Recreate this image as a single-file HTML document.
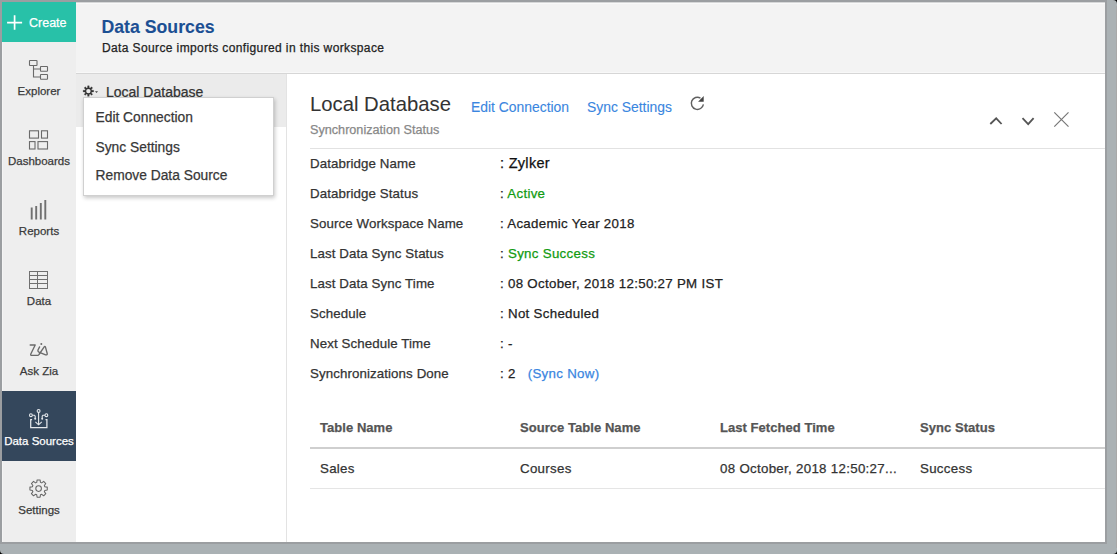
<!DOCTYPE html>
<html><head><meta charset="utf-8">
<style>
*{margin:0;padding:0;box-sizing:border-box}
html,body{width:1117px;height:554px;overflow:hidden}
body{position:relative;background:#000;-webkit-font-smoothing:antialiased;font-family:"Liberation Sans",sans-serif;color:#333}
.a{position:absolute;white-space:nowrap;line-height:1;-webkit-text-stroke:.25px currentColor}
#frame{position:absolute;left:0;top:0;width:1107px;height:544px;background:#9b9ea1;border-top-left-radius:0}
#app{position:absolute;left:2px;top:2px;width:1103px;height:540px;background:#fff;overflow:hidden}
#side{position:absolute;left:0;top:0;width:74px;height:540px;background:#eeeeee}
#create{position:absolute;left:0;top:0;width:74px;height:40px;z-index:2;background:#28c1a8}
.item{position:absolute;left:0;width:74px;height:70px}
.lbl{position:absolute;left:0;width:74px;text-align:center;font-size:11.5px;line-height:1;color:#3a3a3a;-webkit-text-stroke:.25px currentColor}
#hdr{position:absolute;left:74px;top:0;width:1029px;height:72px;background:#f3f3f3;border-bottom:1px solid #d6d6d6;box-shadow:inset 0 -1px 0 #f8f8f8}
#lp{position:absolute;left:74px;top:72px;width:211px;height:468px;background:#fff;border-right:1px solid #e3e3e3}
#lph{position:absolute;left:0;top:0;width:210px;height:53px;background:#ebebeb}
#menu{position:absolute;left:81px;top:95px;width:191px;height:99px;background:#fff;border:1px solid #d0d0d0;box-shadow:1px 2px 4px rgba(0,0,0,.22)}
.row{position:absolute;left:308px;font-size:13.3px;letter-spacing:.1px;color:#333}
.val{position:absolute;left:498px;font-size:13.3px;letter-spacing:.3px;color:#222}
.th{position:absolute;font-size:13px;font-weight:bold;letter-spacing:.05px;color:#555}
.td{position:absolute;font-size:13.3px;letter-spacing:.3px;color:#333}
</style></head><body>
<div style="position:absolute;left:0;top:0;width:1117px;height:554px;background:#aab1b4;border-radius:4px"></div><div style="position:absolute;left:1116px;top:6px;width:1px;height:542px;background:#a8a8a8"></div>
<div id="frame"></div>
<div id="app">
  <div id="side">
    <div class="a" style="left:0;top:40px;width:1px;height:500px;background:#f4f4f4"></div>
    <div id="create">
      <svg class="a" style="left:0;top:0" width="30" height="40" viewBox="0 0 30 40"><path d="M5.1 20.6H20.1M12.6 13.2V27.8" stroke="#fff" stroke-width="1.7" fill="none"/></svg>
      <div class="a" style="left:27px;top:14.5px;font-size:12.5px;color:#fff">Create</div>
    </div>
    <!-- Explorer 39..109 -->
    <div class="item" style="top:39px">
      <svg class="a" style="left:0;top:0" width="74" height="70" viewBox="0 0 74 70">
        <g fill="none" stroke="#6a6a6a" stroke-width="1.1">
          <rect x="27.5" y="19.5" width="7.5" height="5" rx=".5"/>
          <rect x="38.5" y="25.5" width="7" height="4.8" rx=".5"/>
          <rect x="38.5" y="33.5" width="7" height="4.8" rx=".5"/>
          <path d="M31.5 24.5V36H38.5M31.5 28H38.5"/>
        </g>
      </svg>
      <div class="lbl" style="top:45px">Explorer</div>
    </div>
    <!-- Dashboards -->
    <div class="item" style="top:109px">
      <svg class="a" style="left:0;top:0" width="74" height="70" viewBox="0 0 74 70">
        <g fill="none" stroke="#6a6a6a" stroke-width="1.1">
          <rect x="27.5" y="19.8" width="9" height="7.3"/>
          <rect x="39.5" y="19.8" width="6" height="7.3"/>
          <rect x="27.5" y="30.6" width="5.5" height="7.4"/>
          <rect x="36" y="30.6" width="9.5" height="7.4"/>
        </g>
      </svg>
      <div class="lbl" style="top:45px">Dashboards</div>
    </div>
    <!-- Reports -->
    <div class="item" style="top:179px">
      <svg class="a" style="left:0;top:0" width="74" height="70" viewBox="0 0 74 70">
        <g fill="none" stroke="#707070" stroke-width="1.9">
          <path d="M29.7 26.5V38.6M34.2 25V38.6M38.8 22V38.6M43.3 19V38.6"/>
        </g>
      </svg>
      <div class="lbl" style="top:45px">Reports</div>
    </div>
    <!-- Data -->
    <div class="item" style="top:249px">
      <svg class="a" style="left:0;top:0" width="74" height="70" viewBox="0 0 74 70">
        <g fill="none" stroke="#707070" stroke-width="1">
          <rect x="27.5" y="20.5" width="18" height="17"/>
          <path d="M35.5 20.5V37.5M27.5 24.5H45.5M27.5 28.5H45.5M27.5 32.5H45.5"/>
        </g>
      </svg>
      <div class="lbl" style="top:45px">Data</div>
    </div>
    <!-- Ask Zia -->
    <div class="item" style="top:319px">
      <svg class="a" style="left:0;top:0" width="74" height="70" viewBox="0 0 74 70">
        <g fill="none" stroke="#6a6a6a" stroke-width="1.35" stroke-linejoin="round" stroke-linecap="round">
          <path d="M28.2 24H33.2L28.8 33Q28.3 34.4 29.8 34.4H35.5Q36.5 34.4 37 33.5L42.2 25.8Q42.8 25 43.4 25.9L45.2 32.5Q45.4 34.4 43.6 33.8L37.5 31.4Q35.4 30.6 36.1 28.8L37.6 25.9"/>
        </g>
        <circle cx="39.3" cy="23" r="1" fill="#6a6a6a"/>
      </svg>
      <div class="lbl" style="top:45px">Ask Zia</div>
    </div>
    <!-- Data Sources active -->
    <div class="item" style="top:389px;background:#34475c">
      <svg class="a" style="left:0;top:0" width="74" height="70" viewBox="0 0 74 70">
        <g fill="none" stroke="#e4e8ec" stroke-width="1.1">
          <circle cx="36.6" cy="19.9" r="1.45"/>
          <circle cx="28.9" cy="24.2" r="1.4"/>
          <circle cx="44.4" cy="24.2" r="1.4"/>
          <path d="M36.6 21.4V33.6M33.4 30.8L36.6 33.8L39.8 30.8"/>
          <path d="M30.3 24.2H32.4L33.2 25.2V27.5M43 24.2H40.9L40.2 25.2V27.5"/>
          <path d="M30.1 28.6H28.7V36.5H44.9V28.6H43.5" stroke-width="1.25"/>
        </g>
        <circle cx="33.2" cy="27.7" r="1" fill="#e4e8ec"/>
        <circle cx="40.2" cy="27.7" r="1" fill="#e4e8ec"/>
      </svg>
      <div class="lbl" style="top:45px;color:#fff">Data Sources</div>
    </div>
    <!-- Settings -->
    <div class="item" style="top:459px">
      <svg class="a" style="left:0;top:0" width="74" height="70" viewBox="0 0 74 70">
        <g fill="none" stroke="#666" stroke-width="1.05">
          <path d="M42.83 25.74 L45.27 26.11 L45.27 29.09 L42.83 29.46 L42.32 30.69 L43.79 32.68 L41.68 34.79 L39.69 33.32 L38.46 33.83 L38.09 36.27 L35.11 36.27 L34.74 33.83 L33.51 33.32 L31.52 34.79 L29.41 32.68 L30.88 30.69 L30.37 29.46 L27.93 29.09 L27.93 26.11 L30.37 25.74 L30.88 24.51 L29.41 22.52 L31.52 20.41 L33.51 21.88 L34.74 21.37 L35.11 18.93 L38.09 18.93 L38.46 21.37 L39.69 21.88 L41.68 20.41 L43.79 22.52 L42.32 24.51Z" stroke-linejoin="round"/>
          <circle cx="36.6" cy="27.6" r="2.8"/>
        </g>
      </svg>
      <div class="lbl" style="top:44px">Settings</div>
    </div>
  </div>

  <div class="a" style="left:74px;top:0;width:1029px;height:1px;background:#d6d7d8;z-index:3"></div>
  <div class="a" style="left:74px;top:1px;width:1029px;height:1px;background:#f9f9f9;z-index:3"></div>
  <div id="hdr">
    <div class="a" style="left:25.5px;top:16.5px;font-size:17.7px;font-weight:bold;color:#1b4f93;-webkit-text-stroke:.1px currentColor">Data Sources</div>
    <div class="a" style="left:26px;top:40px;font-size:12px;letter-spacing:.38px;color:#222">Data Source imports configured in this workspace</div>
  </div>

  <div id="lp">
    <div id="lph">
      <svg class="a" style="left:4px;top:10px" width="22" height="16" viewBox="0 0 22 16">
        <path d="M11.80 6.27 L13.64 6.31 L13.64 7.89 L11.80 7.93 L11.39 8.92 L12.67 10.25 L11.55 11.37 L10.22 10.09 L9.23 10.50 L9.19 12.34 L7.61 12.34 L7.57 10.50 L6.58 10.09 L5.25 11.37 L4.13 10.25 L5.41 8.92 L5.00 7.93 L3.16 7.89 L3.16 6.31 L5.00 6.27 L5.41 5.28 L4.13 3.95 L5.25 2.83 L6.58 4.11 L7.57 3.70 L7.61 1.86 L9.19 1.86 L9.23 3.70 L10.22 4.11 L11.55 2.83 L12.67 3.95 L11.39 5.28Z" fill="#333" stroke="#333" stroke-width=".3" stroke-linejoin="round"/>
        <circle cx="8.4" cy="7.1" r="2.2" fill="#ebebeb"/>
        <path d="M15 7.2h3l-1.5 1.8z" fill="#444"/>
      </svg>
      <div class="a" style="left:30px;top:11px;font-size:14px;color:#333">Local Database</div>
    </div>
  </div>
  <div id="menu">
    <div class="a" style="left:11.5px;top:13px;font-size:13.8px;color:#383838">Edit Connection</div>
    <div class="a" style="left:11.5px;top:42.5px;font-size:13.8px;color:#383838">Sync Settings</div>
    <div class="a" style="left:11.5px;top:70.8px;font-size:13.8px;color:#383838">Remove Data Source</div>
  </div>

  <!-- main panel -->
  <div class="a" style="left:308px;top:91.5px;font-size:20.3px;color:#333;-webkit-text-stroke:.05px currentColor">Local Database</div>
  <div class="a" style="left:469px;top:98.5px;font-size:13.9px;color:#3a86e0;-webkit-text-stroke:.1px currentColor">Edit Connection</div>
  <div class="a" style="left:585px;top:98.5px;font-size:13.9px;color:#3a86e0;-webkit-text-stroke:.1px currentColor">Sync Settings</div>
  <div class="a" style="left:308px;top:121.8px;font-size:12.65px;color:#888">Synchronization Status</div>
  <svg class="a" style="left:683px;top:90px" width="20" height="20" viewBox="0 0 20 20">
    <path d="M18.41 12.36A6.1 6.1 0 1 1 15.45 6.02" fill="none" stroke="#606060" stroke-width="1.4"/>
    <path d="M18.7 3.9V9.8H13.1Z" fill="#444"/>
  </svg>
  <svg class="a" style="left:980px;top:108px" width="100" height="30" viewBox="0 0 100 30">
    <g fill="none" stroke="#555" stroke-width="1.8">
      <path d="M8.3 14L14.2 8.3L19.6 14"/>
      <path d="M40.5 8.2L46.2 14.1L51.6 8.2"/>
    </g>
    <path d="M72.3 2.3L86.5 16.6M86.5 2.3L72.3 16.6" fill="none" stroke="#777" stroke-width="1.2"/>
  </svg>
  <div class="a" style="left:308px;top:146px;width:795px;height:1px;background:#e2e2e2"></div>

  <div class="row a" style="top:155px">Databridge Name</div>
  <div class="row a" style="top:185px">Databridge Status</div>
  <div class="row a" style="top:215px">Source Workspace Name</div>
  <div class="row a" style="top:245px">Last Data Sync Status</div>
  <div class="row a" style="top:275px">Last Data Sync Time</div>
  <div class="row a" style="top:305px">Schedule</div>
  <div class="row a" style="top:335px">Next Schedule Time</div>
  <div class="row a" style="top:365px">Synchronizations Done</div>

  <div class="val a" style="top:154px;font-size:14.5px;color:#111">: Zylker</div>
  <div class="val a" style="top:185px">: <span style="color:#119b11">Active</span></div>
  <div class="val a" style="top:215px">: Academic Year 2018</div>
  <div class="val a" style="top:245px">: <span style="color:#119b11">Sync Success</span></div>
  <div class="val a" style="top:275px">: 08 October, 2018 12:50:27 PM IST</div>
  <div class="val a" style="top:305px">: Not Scheduled</div>
  <div class="val a" style="top:335px">: -</div>
  <div class="val a" style="top:365px">: 2 &nbsp;&nbsp;<span style="color:#3a86e0">(Sync Now)</span></div>

  <div class="th a" style="left:318px;top:419px">Table Name</div>
  <div class="th a" style="left:518px;top:419px">Source Table Name</div>
  <div class="th a" style="left:718px;top:419px">Last Fetched Time</div>
  <div class="th a" style="left:918px;top:419px">Sync Status</div>
  <div class="a" style="left:308px;top:445px;width:795px;height:2px;background:#cfcfcf"></div>
  <div class="td a" style="left:318px;top:460px">Sales</div>
  <div class="td a" style="left:518px;top:460px">Courses</div>
  <div class="td a" style="left:718px;top:460px">08 October, 2018 12:50:27...</div>
  <div class="td a" style="left:918px;top:460px">Success</div>
  <div class="a" style="left:308px;top:486px;width:795px;height:1px;background:#e5e5e5"></div>
</div>
</body></html>
